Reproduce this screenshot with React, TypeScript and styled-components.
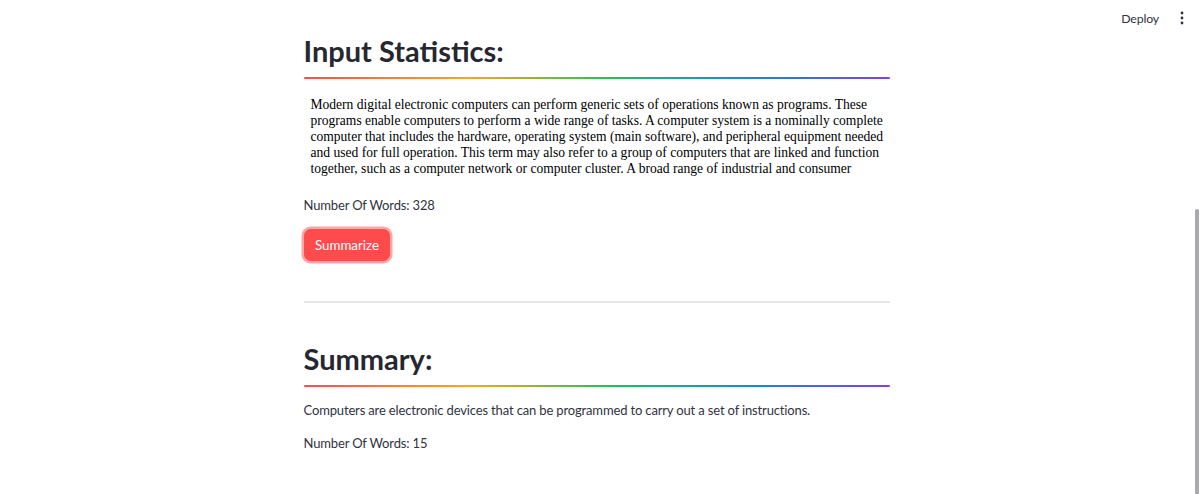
import React from "react";
import styled, { createGlobalStyle } from "styled-components";

const GlobalStyle = createGlobalStyle`
  html, body {
    margin: 0;
    padding: 0;
    background: #ffffff;
    overflow: hidden;
  }
  body {
    font-family: Lato, "Noto Sans", sans-serif;
    color: #31333f;
  }
`;

// the embedded frame only shows the first five lines of the input
const inputLines = [
  "Modern digital electronic computers can perform generic sets of operations known as programs. These",
  "programs enable computers to perform a wide range of tasks. A computer system is a nominally complete",
  "computer that includes the hardware, operating system (main software), and peripheral equipment needed",
  "and used for full operation. This term may also refer to a group of computers that are linked and function",
  "together, such as a computer network or computer cluster. A broad range of industrial and consumer",
];

const summaryText =
  "Computers are electronic devices that can be programmed to carry out a set of instructions.";

const Shell = styled.div`
  position: relative;
  width: 1200px;
  height: 494px;
  overflow: hidden;
`;

const Header = styled.header`
  position: absolute;
  top: 0;
  right: 0;
  height: 36px;
  display: flex;
  align-items: center;
  gap: 20px;
  padding-right: 15px;
`;

const DeployButton = styled.button`
  border: none;
  background: transparent;
  padding: 0;
  font-family: Lato, "Noto Sans", sans-serif;
  font-size: 12.3px;
  letter-spacing: -0.15px;
  color: #31333f;
  cursor: pointer;
`;

const MenuButton = styled.button`
  border: none;
  background: transparent;
  padding: 0;
  width: 6px;
  height: 16px;
  display: flex;
  align-items: center;
  justify-content: center;
  color: #31333f;
`;

const Main = styled.main`
  display: flex;
  justify-content: center;
  padding-right: 7px;
`;

const Column = styled.div`
  width: 586px;
  padding-top: 33px;
  display: flex;
  flex-direction: column;
  align-items: flex-start;
`;

const Heading = styled.h2<{ $gap?: number }>`
  margin: ${(p) => p.$gap ?? 0}px 0 0;
  font-size: 29px;
  line-height: 36px;
  font-weight: 700;
  color: #262730;
`;

const Rainbow = styled.hr`
  align-self: stretch;
  margin: 8px 0 0;
  border: none;
  height: 2px;
  border-radius: 1px;
  background: linear-gradient(
    to right,
    #ff4b4b,
    #ffa421 28%,
    #21c354 52%,
    #1c83e1 78%,
    #803df5
  );
`;

const Frame = styled.div`
  align-self: stretch;
  margin-top: 12px;
  padding: 6.3px 7px 6px;
  height: 80px;
`;

const FrameLine = styled.span`
  display: block;
  white-space: nowrap;
  font-family: "Liberation Serif", "Times New Roman", serif;
  font-size: 13.55px;
  line-height: 16px;
  color: #000000;
`;

const Text = styled.p<{ $gap: number }>`
  margin: ${(p) => p.$gap}px 0 0;
  font-size: 13px;
  letter-spacing: -0.15px;
  line-height: 20px;
  color: #31333f;
`;

const PrimaryButton = styled.button`
  margin-top: 14px;
  height: 32px;
  padding: 0 10.5px;
  border: 1px solid #ff4b4b;
  border-radius: 6.5px;
  background: #ff4b4b;
  color: #ffffff;
  font-family: Lato, "Noto Sans", sans-serif;
  font-size: 13.3px;
  box-shadow: 0 0 0 2.5px rgba(255, 75, 75, 0.5);
  cursor: pointer;
`;

const Divider = styled.hr`
  align-self: stretch;
  margin: 40px 0 0;
  border: none;
  height: 2px;
  background: #e6e6e8;
`;

const ScrollThumb = styled.div`
  position: absolute;
  right: 1px;
  top: 209px;
  width: 4px;
  height: 300px;
  border-radius: 2px;
  background: #a9a9ae;
`;

const DotsIcon = () => (
  <svg width="4" height="14" viewBox="0 0 4 14" fill="currentColor">
    <circle cx="2" cy="2" r="1.4" />
    <circle cx="2" cy="7" r="1.4" />
    <circle cx="2" cy="12" r="1.4" />
  </svg>
);

const countWords = (s: string) => s.trim().split(/\s+/).length;

export default function App() {
  return (
    <Shell>
      <GlobalStyle />
      <Header>
        <DeployButton>Deploy</DeployButton>
        <MenuButton aria-label="Main menu">
          <DotsIcon />
        </MenuButton>
      </Header>
      <Main>
        <Column>
          <Heading>Input Statistics:</Heading>
          <Rainbow />
          <Frame>
            {inputLines.map((line) => (
              <FrameLine key={line}>{line}</FrameLine>
            ))}
          </Frame>
          <Text $gap={11.4}>Number Of Words: 328</Text>
          <PrimaryButton>Summarize</PrimaryButton>
          <Divider />
          <Heading $gap={38.2}>Summary:</Heading>
          <Rainbow />
          <Text $gap={13.5}>{summaryText}</Text>
          <Text $gap={13}>Number Of Words: {countWords(summaryText)}</Text>
        </Column>
      </Main>
      <ScrollThumb />
    </Shell>
  );
}
